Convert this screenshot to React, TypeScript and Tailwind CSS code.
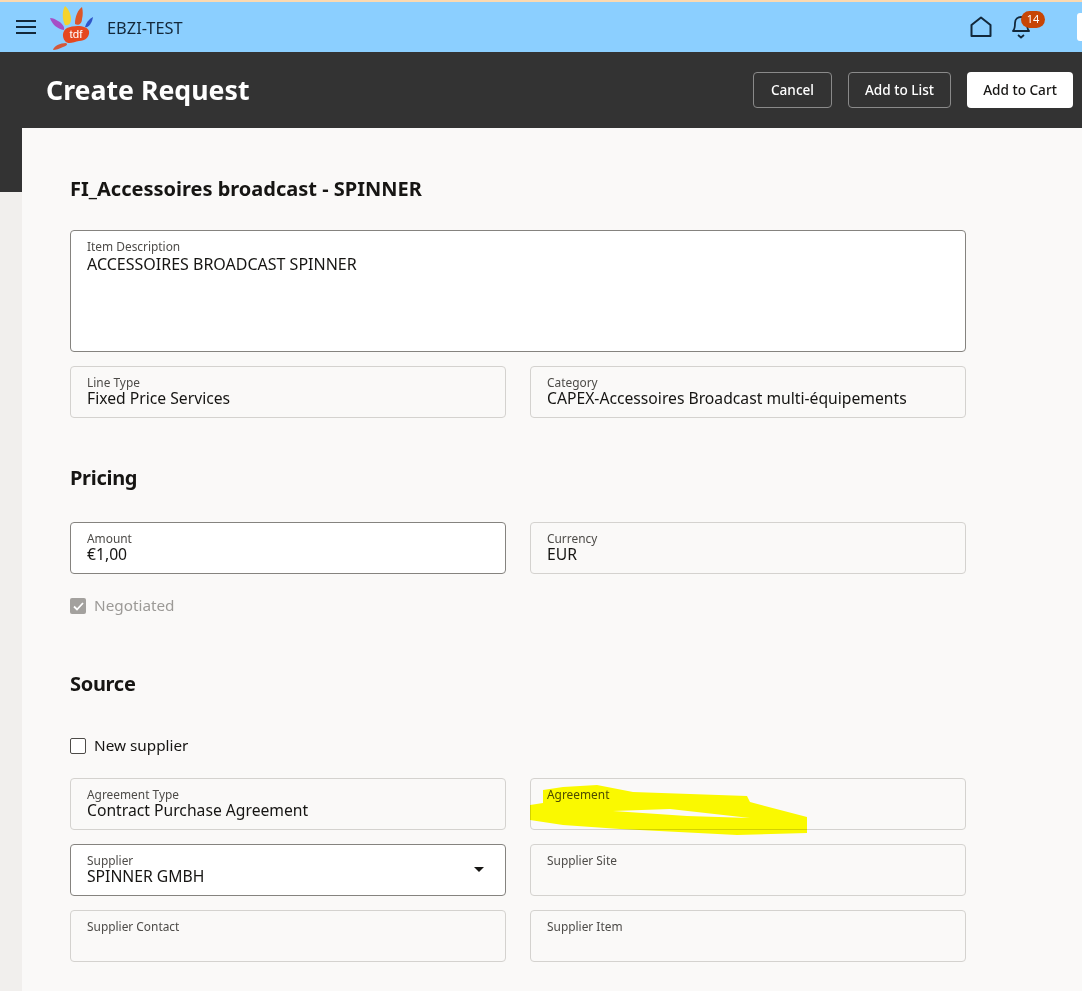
import React from "react";

function Logo() {
  return (
    <svg width="46" height="46" viewBox="0 0 46 46" className="shrink-0">
      <path d="M15 2 C12 7 12 15 15 21 C18 22 21 20 21 15 C21 10 18 4 15 2Z" fill="#f5d32e" />
      <path d="M32 3 C28 6 25 12 25 20 C28 22 32 20 32 15 C33 11 33 7 32 3Z" fill="#dc5528" />
      <path d="M0 14 C2 20 7 25 14 26 C15 23 12 19 8 17 C5 15 3 14 0 14Z" fill="#a64fc6" />
      <path d="M43 13 C39 15 36 19 35 23 C39 24 42 19 43 13Z" fill="#2f56c8" />
      <path d="M17 24 C24 21 37 21 39 27 C40 33 35 37 29 37 C24 38 18 41 15 37 C12 33 12 27 17 24Z" fill="#e5481f" />
      <path d="M3 46 C4 42 10 39 16 39 C18 40 17 42 13 43 C9 45 6 46 3 46Z" fill="#d2583a" />
      <text x="26" y="34" textAnchor="middle" fill="#fff" fontSize="11.5" fontFamily="'Liberation Sans', sans-serif">tdf</text>
    </svg>
  );
}

function Field({
  label,
  value,
  active,
  caret,
}: {
  label: string;
  value?: string;
  active?: boolean;
  caret?: boolean;
}) {
  return (
    <div
      className={`relative h-[52px] rounded-[4px] border px-4 pt-[8px] ${
        active ? "border-[#85837f] bg-white" : "border-[#d4d2cf] bg-[#faf9f8]"
      }`}
    >
      <div className="text-[11.9px] leading-[15px] text-[#4d4b48]">{label}</div>
      {value && <div className="text-[15.7px] leading-[16px] text-[#161513]">{value}</div>}
      {caret && (
        <div className="absolute right-[21px] top-[22px] h-0 w-0 border-x-[5px] border-t-[5px] border-x-transparent border-t-[#161513]" />
      )}
    </div>
  );
}

function Heading({ children, className = "" }: { children: React.ReactNode; className?: string }) {
  return <h2 className={`text-[20px] font-bold leading-[28px] text-[#161513] ${className}`}>{children}</h2>;
}

export default function App() {
  return (
    <div className="relative h-[991px] w-full overflow-hidden bg-[#f1efed] font-['Noto_Sans','Open_Sans',sans-serif]">
      <div className="h-[2px] bg-[#fcd9b0]" />
      <header className="relative flex h-[50px] items-center bg-[#8bcfff] pl-4 text-[#13283a]">
        <svg width="20" height="14" viewBox="0 0 20 14" className="shrink-0">
          <path d="M0 1h20M0 7h20M0 13h20" stroke="#13283a" strokeWidth="2" />
        </svg>
        <div className="ml-[14px]">
          <Logo />
        </div>
        <span className="ml-[11px] mt-[2px] text-[16.4px]">EBZI-TEST</span>
        <svg width="22" height="22" viewBox="0 0 22 22" fill="none" className="ml-auto mr-[19px]">
          <path d="M1.5 9 L11 1.5 L20.5 9 V20 H1.5 Z" stroke="#13283a" strokeWidth="2" strokeLinejoin="round" />
        </svg>
        <div className="relative mr-[49px] h-[24px] w-[22px]">
          <svg width="20" height="24" viewBox="0 0 20 24" fill="none">
            <path d="M2 16c2-2 2-4 2-8s3-6 6-6 6 2 6 6 0 6 2 8Z" stroke="#13283a" strokeWidth="1.8" strokeLinejoin="round" />
            <path d="M7 20l3 2.5 3-2.5" stroke="#13283a" strokeWidth="1.8" />
          </svg>
          <span className="absolute left-[10px] top-[-4px] flex h-[17px] w-[24px] items-center justify-center rounded-full bg-[#c74505] text-[11px] text-white">
            14
          </span>
        </div>
        <div className="absolute left-[1077px] top-[11px] h-[28px] w-[20px] rounded-[3px] bg-white" />
      </header>
      <div className="flex h-[76px] items-center justify-between bg-[#333333] pl-[46px] pr-[9px]">
        <h1 className="text-[26.7px] font-bold text-white">Create Request</h1>
        <div className="flex gap-4 text-[13.6px] font-medium">
          <button className="h-[36px] w-[79px] rounded-[4px] border border-[#8a8a8a] text-white">Cancel</button>
          <button className="h-[36px] w-[103px] rounded-[4px] border border-[#8a8a8a] text-white">Add to List</button>
          <button className="h-[36px] w-[106px] rounded-[4px] bg-white text-[#161513]">Add to Cart</button>
        </div>
      </div>
      <div className="flex">
        <div className="h-[64px] w-[22px] shrink-0 bg-[#333333]" />
        <main className="h-[863px] flex-1 bg-[#faf9f8] pl-[48px] pt-[47px]">
          <div className="w-[896px]">
            <Heading>FI_Accessoires broadcast - SPINNER</Heading>
            <div className="mt-[27px] h-[122px] rounded-[4px] border border-[#85837f] bg-white px-4 pt-[8px]">
              <div className="text-[11.9px] leading-[15px] text-[#4d4b48]">Item Description</div>
              <div className="text-[16px] leading-[20px] text-[#161513]">ACCESSOIRES BROADCAST SPINNER</div>
            </div>
            <div className="mt-[14px] grid grid-cols-2 gap-6">
              <Field label="Line Type" value="Fixed Price Services" />
              <Field label="Category" value="CAPEX-Accessoires Broadcast multi-équipements" />
            </div>
            <Heading className="mt-[46px] tracking-[-0.3px]">Pricing</Heading>
            <div className="mt-[30px] grid grid-cols-2 gap-6">
              <Field label="Amount" value="€1,00" active />
              <Field label="Currency" value="EUR" />
            </div>
            <label className="mt-[22px] flex h-[20px] items-center gap-2 text-[15.3px] text-[#9c9a97]">
              <span className="flex h-4 w-4 items-center justify-center rounded-[2px] bg-[#a3a19e]">
                <svg width="11" height="9" viewBox="0 0 11 9" fill="none">
                  <path d="M1 4.5 L4 7.5 L10 1" stroke="#fff" strokeWidth="1.8" />
                </svg>
              </span>
              <span className="mb-[2px]">Negotiated</span>
            </label>
            <Heading className="mt-[54px] tracking-[-0.3px]">Source</Heading>
            <label className="mt-[38px] flex h-[20px] items-center gap-2 text-[15.3px] text-[#161513]">
              <span className="h-4 w-4 rounded-[2px] border-[1.5px] border-[#4d4b48] bg-white" />
              <span className="mb-[2px]">New supplier</span>
            </label>
            <div className="mt-[22px] grid grid-cols-2 gap-x-6 gap-y-[14px]">
              <Field label="Agreement Type" value="Contract Purchase Agreement" />
              <Field label="Agreement" />
              <Field label="Supplier" value="SPINNER GMBH" active caret />
              <Field label="Supplier Site" />
              <Field label="Supplier Contact" />
              <Field label="Supplier Item" />
            </div>
          </div>
        </main>
      </div>
      <svg className="absolute left-[528px] top-[784px] mix-blend-multiply" width="282" height="54" viewBox="0 0 282 54">
        <path
          fillRule="evenodd"
          d="M15 6 L35 3 L69 1 L105 8 L219 12 L222 18 L279 33 L279 49 L209 51 L92 45 L35 41 L2 36 L2 21 L15 19 Z M85 27 L142 25 L222 34 L159 32 Z"
          fill="#ffff00"
        />
      </svg>
    </div>
  );
}
